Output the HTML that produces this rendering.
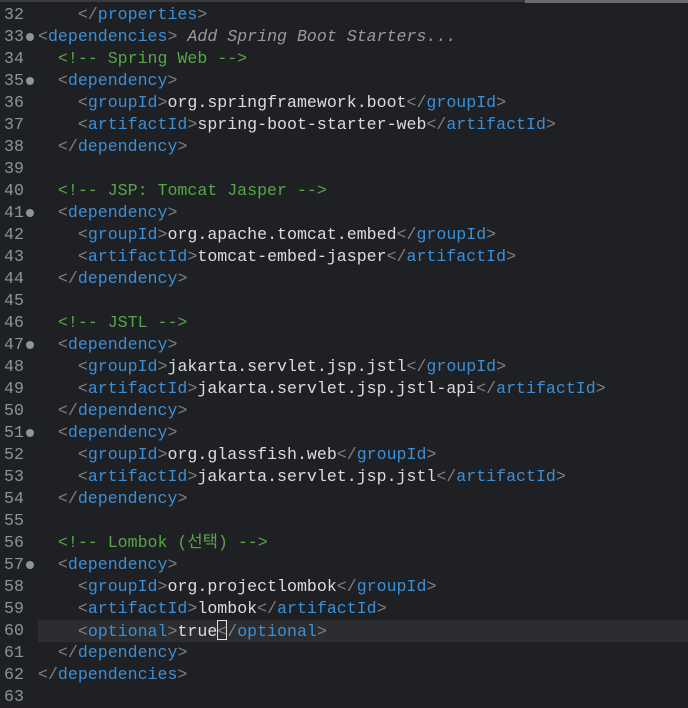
<!DOCTYPE html>
<html><head><meta charset="utf-8"><style>
body{margin:0;background:#1f2023;width:688px;height:699px;overflow:hidden;position:relative;font-family:"Liberation Mono","Noto Sans CJK KR",monospace;font-size:16.6px}
.top1{position:absolute;left:0;top:0;width:525px;height:2px;background:#3a3b3e}
.top2{position:absolute;left:525px;top:0;width:163px;height:3px;background:#6b6c6f}
.l{position:absolute;left:0;height:22px;line-height:22px;white-space:pre;width:688px}
.n{position:absolute;left:4px;color:#8b949c}
.c{position:absolute;left:38px;color:#dcdcdc}
.dot{position:absolute;left:26px;top:7px;width:8px;height:8px;border-radius:50%;background:#8b949c}
.b{color:#808080}.t{color:#3d8fd5}.g{color:#57a64a}.i{color:#9a9a9a;font-style:italic}
.hl{position:absolute;left:38px;width:650px;height:22px;background:#2c2d30}
.cur{display:inline-block;width:10px;height:20px;border:1px solid #e0e0e0;box-sizing:border-box;vertical-align:-4px;margin-right:-10px}
</style></head><body>
<div class="top1"></div><div class="top2"></div>
<div class="hl" style="top:620px"></div>
<div class="l" style="top:4px"><span class="n">32</span><span class="c">    <span class="b">&lt;/</span><span class="t">properties</span><span class="b">&gt;</span></span></div>
<div class="l" style="top:26px"><span class="n">33</span><span class="dot"></span><span class="c"><span class="b">&lt;</span><span class="t">dependencies</span><span class="b">&gt;</span> <span class="i">Add Spring Boot Starters...</span></span></div>
<div class="l" style="top:48px"><span class="n">34</span><span class="c">  <span class="g">&lt;!-- Spring Web --&gt;</span></span></div>
<div class="l" style="top:70px"><span class="n">35</span><span class="dot"></span><span class="c">  <span class="b">&lt;</span><span class="t">dependency</span><span class="b">&gt;</span></span></div>
<div class="l" style="top:92px"><span class="n">36</span><span class="c">    <span class="b">&lt;</span><span class="t">groupId</span><span class="b">&gt;</span>org.springframework.boot<span class="b">&lt;/</span><span class="t">groupId</span><span class="b">&gt;</span></span></div>
<div class="l" style="top:114px"><span class="n">37</span><span class="c">    <span class="b">&lt;</span><span class="t">artifactId</span><span class="b">&gt;</span>spring-boot-starter-web<span class="b">&lt;/</span><span class="t">artifactId</span><span class="b">&gt;</span></span></div>
<div class="l" style="top:136px"><span class="n">38</span><span class="c">  <span class="b">&lt;/</span><span class="t">dependency</span><span class="b">&gt;</span></span></div>
<div class="l" style="top:158px"><span class="n">39</span></div>
<div class="l" style="top:180px"><span class="n">40</span><span class="c">  <span class="g">&lt;!-- JSP: Tomcat Jasper --&gt;</span></span></div>
<div class="l" style="top:202px"><span class="n">41</span><span class="dot"></span><span class="c">  <span class="b">&lt;</span><span class="t">dependency</span><span class="b">&gt;</span></span></div>
<div class="l" style="top:224px"><span class="n">42</span><span class="c">    <span class="b">&lt;</span><span class="t">groupId</span><span class="b">&gt;</span>org.apache.tomcat.embed<span class="b">&lt;/</span><span class="t">groupId</span><span class="b">&gt;</span></span></div>
<div class="l" style="top:246px"><span class="n">43</span><span class="c">    <span class="b">&lt;</span><span class="t">artifactId</span><span class="b">&gt;</span>tomcat-embed-jasper<span class="b">&lt;/</span><span class="t">artifactId</span><span class="b">&gt;</span></span></div>
<div class="l" style="top:268px"><span class="n">44</span><span class="c">  <span class="b">&lt;/</span><span class="t">dependency</span><span class="b">&gt;</span></span></div>
<div class="l" style="top:290px"><span class="n">45</span></div>
<div class="l" style="top:312px"><span class="n">46</span><span class="c">  <span class="g">&lt;!-- JSTL --&gt;</span></span></div>
<div class="l" style="top:334px"><span class="n">47</span><span class="dot"></span><span class="c">  <span class="b">&lt;</span><span class="t">dependency</span><span class="b">&gt;</span></span></div>
<div class="l" style="top:356px"><span class="n">48</span><span class="c">    <span class="b">&lt;</span><span class="t">groupId</span><span class="b">&gt;</span>jakarta.servlet.jsp.jstl<span class="b">&lt;/</span><span class="t">groupId</span><span class="b">&gt;</span></span></div>
<div class="l" style="top:378px"><span class="n">49</span><span class="c">    <span class="b">&lt;</span><span class="t">artifactId</span><span class="b">&gt;</span>jakarta.servlet.jsp.jstl-api<span class="b">&lt;/</span><span class="t">artifactId</span><span class="b">&gt;</span></span></div>
<div class="l" style="top:400px"><span class="n">50</span><span class="c">  <span class="b">&lt;/</span><span class="t">dependency</span><span class="b">&gt;</span></span></div>
<div class="l" style="top:422px"><span class="n">51</span><span class="dot"></span><span class="c">  <span class="b">&lt;</span><span class="t">dependency</span><span class="b">&gt;</span></span></div>
<div class="l" style="top:444px"><span class="n">52</span><span class="c">    <span class="b">&lt;</span><span class="t">groupId</span><span class="b">&gt;</span>org.glassfish.web<span class="b">&lt;/</span><span class="t">groupId</span><span class="b">&gt;</span></span></div>
<div class="l" style="top:466px"><span class="n">53</span><span class="c">    <span class="b">&lt;</span><span class="t">artifactId</span><span class="b">&gt;</span>jakarta.servlet.jsp.jstl<span class="b">&lt;/</span><span class="t">artifactId</span><span class="b">&gt;</span></span></div>
<div class="l" style="top:488px"><span class="n">54</span><span class="c">  <span class="b">&lt;/</span><span class="t">dependency</span><span class="b">&gt;</span></span></div>
<div class="l" style="top:510px"><span class="n">55</span></div>
<div class="l" style="top:532px"><span class="n">56</span><span class="c">  <span class="g">&lt;!-- Lombok (선택) --&gt;</span></span></div>
<div class="l" style="top:554px"><span class="n">57</span><span class="dot"></span><span class="c">  <span class="b">&lt;</span><span class="t">dependency</span><span class="b">&gt;</span></span></div>
<div class="l" style="top:576px"><span class="n">58</span><span class="c">    <span class="b">&lt;</span><span class="t">groupId</span><span class="b">&gt;</span>org.projectlombok<span class="b">&lt;/</span><span class="t">groupId</span><span class="b">&gt;</span></span></div>
<div class="l" style="top:598px"><span class="n">59</span><span class="c">    <span class="b">&lt;</span><span class="t">artifactId</span><span class="b">&gt;</span>lombok<span class="b">&lt;/</span><span class="t">artifactId</span><span class="b">&gt;</span></span></div>
<div class="l" style="top:620px"><span class="n">60</span><span class="c">    <span class="b">&lt;</span><span class="t">optional</span><span class="b">&gt;</span>true<span class="cur"></span><span class="b">&lt;/</span><span class="t">optional</span><span class="b">&gt;</span></span></div>
<div class="l" style="top:642px"><span class="n">61</span><span class="c">  <span class="b">&lt;/</span><span class="t">dependency</span><span class="b">&gt;</span></span></div>
<div class="l" style="top:664px"><span class="n">62</span><span class="c"><span class="b">&lt;/</span><span class="t">dependencies</span><span class="b">&gt;</span></span></div>
<div class="l" style="top:686px"><span class="n">63</span></div>
</body></html>
